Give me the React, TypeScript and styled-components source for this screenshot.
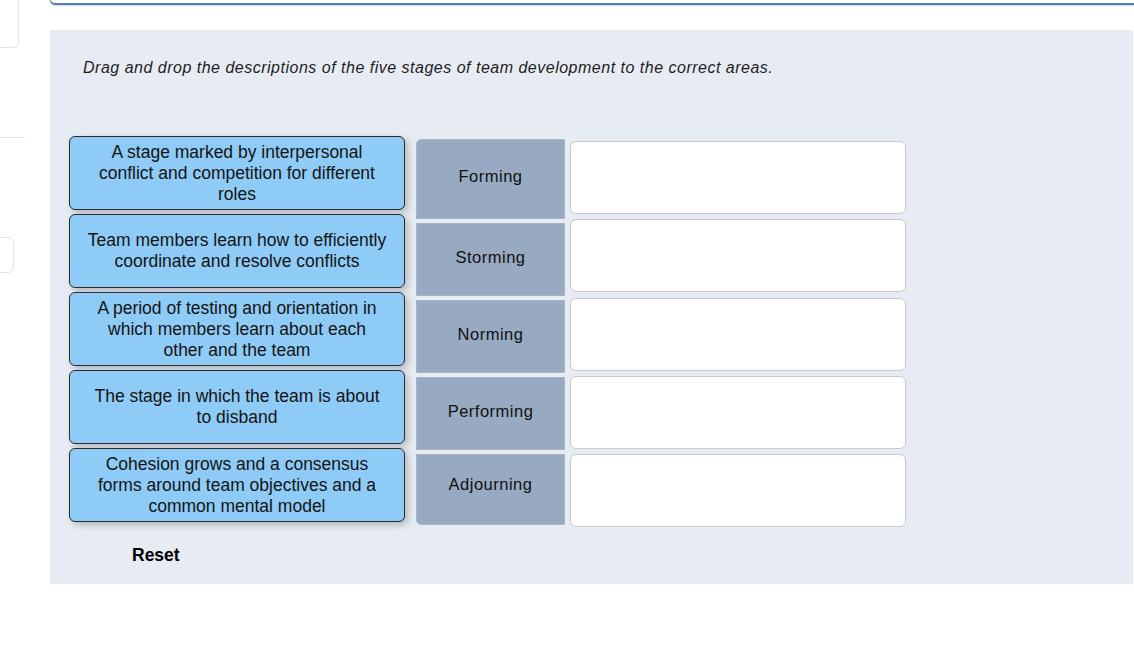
import React from "react";
import styled, { createGlobalStyle } from "styled-components";

const Global = createGlobalStyle`
  html, body { margin: 0; padding: 0; background: #ffffff; }
  body { font-family: "Liberation Sans", Arial, sans-serif; color: #111; overflow: hidden; }
  * { box-sizing: border-box; }
`;

const Page = styled.div`
  display: flex;
  width: 1134px;
  height: 649px;
  overflow: hidden;
`;

const Sidebar = styled.div`
  width: 25px;
  flex: none;
  display: flex;
  flex-direction: column;
  overflow: hidden;
`;

const SideBox = styled.div<{ $w: number; $h: number; $mt: number }>`
  width: ${(p) => p.$w}px;
  height: ${(p) => p.$h}px;
  margin-top: ${(p) => p.$mt}px;
  margin-left: -10px;
  border: 1px solid #e2e4e8;
  border-radius: 0 6px 6px 0;
  flex: none;
`;

const SideRule = styled.div`
  width: 25px;
  height: 1px;
  background: #e6e8ec;
  margin-top: 89px;
  flex: none;
`;

const Main = styled.div`
  flex: 1;
  margin-left: 25px;
  display: flex;
  flex-direction: column;
`;

const TopFrame = styled.div`
  height: 5px;
  border-left: 1px solid #5a7db3;
  border-bottom: 2px solid #5a7db3;
  border-bottom-left-radius: 6px;
  box-shadow: 0 1px 0 #c9d6e8;
`;

const Panel = styled.section`
  margin-top: 25px;
  margin-right: 1px;
  height: 554px;
  background: #e7ecf3;
  padding: 29px 0 0 19px;
`;

const Instruction = styled.p`
  margin: 0 0 0 14px;
  font-style: italic;
  font-size: 16px;
  line-height: 18px;
  letter-spacing: 0.5px;
  color: #1e1e1e;
`;

const Workspace = styled.div`
  display: flex;
  margin-top: 59px;
  align-items: flex-start;
`;

const CardColumn = styled.div`
  width: 336px;
  display: flex;
  flex-direction: column;
  gap: 4px;
`;

const Card = styled.div`
  height: 74px;
  background: #8ecbf6;
  border: 1px solid #2b2b2b;
  border-radius: 6px;
  box-shadow: 3px 3px 7px rgba(0, 0, 0, 0.22);
  display: flex;
  align-items: center;
  justify-content: center;
  text-align: center;
  padding: 0 17px;
  font-size: 17.5px;
  line-height: 21px;
  color: #141414;
`;

const LabelColumn = styled.div`
  margin-left: 11px;
  margin-top: 3px;
  width: 149px;
  display: grid;
  grid-template-rows: 80px 73px 73px 73px 71px;
  row-gap: 4px;
`;

const Label = styled.div<{ $pos: "first" | "last" | "mid" }>`
  background: #98aac1;
  border: 1px solid #a7b6ca;
  border-top-left-radius: ${(p) => (p.$pos === "first" ? "5px" : "0")};
  border-bottom-left-radius: ${(p) => (p.$pos === "last" ? "5px" : "0")};
  display: flex;
  align-items: center;
  justify-content: center;
  font-size: 16.5px;
  letter-spacing: 0.5px;
  color: #111;
  padding-bottom: ${(p) => (p.$pos === "last" ? "11px" : "5px")};
`;

const DropColumn = styled.div`
  margin-left: 5px;
  margin-top: 5px;
  width: 336px;
  display: flex;
  flex-direction: column;
  gap: 5.25px;
`;

const Drop = styled.div`
  height: 73px;
  background: #ffffff;
  border: 1px solid #c6c9ce;
  border-radius: 6px;
`;

const ResetButton = styled.button`
  margin: 18px 0 0 63px;
  padding: 0;
  border: none;
  background: transparent;
  font-family: "Liberation Sans", Arial, sans-serif;
  font-weight: bold;
  font-size: 17.5px;
  color: #000;
  cursor: pointer;
`;

const cards = [
  "A stage marked by interpersonal conflict and competition for different roles",
  "Team members learn how to efficiently coordinate and resolve conflicts",
  "A period of testing and orientation in which members learn about each other and the team",
  "The stage in which the team is about to disband",
  "Cohesion grows and a consensus forms around team objectives and a common mental model",
];

const stages = ["Forming", "Storming", "Norming", "Performing", "Adjourning"];

export default function App() {
  return (
    <>
      <Global />
      <Page>
        <Sidebar>
          <SideBox $w={29} $h={60} $mt={-12} />
          <SideRule />
          <SideBox $w={24} $h={36} $mt={99} />
        </Sidebar>
        <Main>
          <TopFrame />
          <Panel>
            <Instruction>
              Drag and drop the descriptions of the five stages of team development to the correct areas.
            </Instruction>
            <Workspace>
              <CardColumn>
                {cards.map((c) => (
                  <Card key={c}>{c}</Card>
                ))}
              </CardColumn>
              <LabelColumn>
                {stages.map((s, i) => (
                  <Label key={s} $pos={i === 0 ? "first" : i === stages.length - 1 ? "last" : "mid"}>
                    {s}
                  </Label>
                ))}
              </LabelColumn>
              <DropColumn>
                {stages.map((s) => (
                  <Drop key={s} aria-label={`${s} drop area`} />
                ))}
              </DropColumn>
            </Workspace>
            <ResetButton>Reset</ResetButton>
          </Panel>
        </Main>
      </Page>
    </>
  );
}
